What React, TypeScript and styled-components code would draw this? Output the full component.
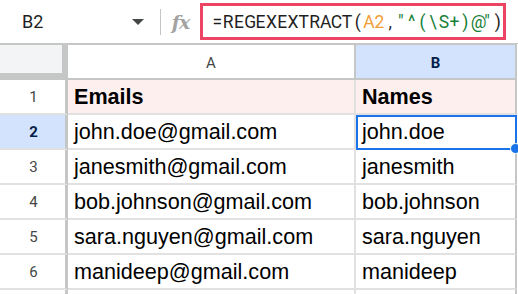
import React from "react";
import styled, { createGlobalStyle } from "styled-components";

const Global = createGlobalStyle`
  html, body { margin: 0; padding: 0; background: #fff; }
  body { font-family: "Liberation Sans", Arial, sans-serif; overflow: hidden; }
`;

const Page = styled.div`
  width: 518px;
  height: 294px;
  overflow: hidden;
  background: #fff;
`;

const FormulaBar = styled.div`
  height: 43px;
  display: flex;
  align-items: center;
  border-bottom: 1px solid #c7c7c7;
  background: #fff;
`;

const NameBox = styled.div`
  width: 160px;
  display: flex;
  align-items: center;
  padding-left: 22px;
  padding-right: 16px;
  box-sizing: border-box;
  font-family: Roboto, "Liberation Sans", sans-serif;
  font-size: 18px;
  color: #1f1f1f;
`;

const NameText = styled.span`
  flex: 1;
`;

const Caret = styled.span`
  width: 0;
  height: 0;
  border-left: 6px solid transparent;
  border-right: 6px solid transparent;
  border-top: 6px solid #444746;
`;

const Divider = styled.div`
  width: 1px;
  height: 26px;
  background: #c4c7c5;
`;

const Fx = styled.span`
  width: 39px;
  text-align: center;
  font-family: "DejaVu Serif", "Liberation Serif", serif;
  font-style: italic;
  font-weight: 700;
  font-size: 19px;
  color: #a3a3a3;
  letter-spacing: -1px;
`;

const FormulaBox = styled.div`
  width: 306px;
  height: 37px;
  box-sizing: border-box;
  border: 3px solid #ed4463;
  display: flex;
  align-items: center;
  padding-left: 9px;
  font-family: Roboto, "Liberation Sans", sans-serif;
  font-size: 17.5px;
`;

const Ch = styled.span<{ $c: string }>`
  display: inline-block;
  width: 10.9px;
  text-align: center;
  color: ${(p) => p.$c};
`;

const Grid = styled.div`
  display: grid;
  grid-template-columns: 68px 288px 161px;
  grid-auto-rows: 35px;
  grid-template-rows: 36px;
`;

const Corner = styled.div`
  box-sizing: border-box;
  background: #f3f4f5;
  border-right: 6px solid #c4c7c5;
  border-bottom: 7px solid #c4c7c5;
  border-top: 1px solid #c4c7c5;
`;

const ColHead = styled.div<{ $sel?: boolean }>`
  box-sizing: border-box;
  display: flex;
  align-items: center;
  justify-content: center;
  border-right: 2px solid #c4c7c5;
  border-bottom: 2px solid #c4c7c5;
  border-top: 1px solid #c4c7c5;
  background: ${(p) => (p.$sel ? "#d3e3fd" : "#fff")};
  color: ${(p) => (p.$sel ? "#041e49" : "#444746")};
  font-weight: ${(p) => (p.$sel ? 700 : 400)};
  font-family: Roboto, "Liberation Sans", sans-serif;
  font-size: 15px;
  padding-top: 2px;
`;

const RowHead = styled.div<{ $sel?: boolean }>`
  box-sizing: border-box;
  display: flex;
  align-items: center;
  justify-content: center;
  border-right: 3px solid #c4c7c5;
  border-bottom: 2px solid #e1e1e1;
  background: ${(p) => (p.$sel ? "#d3e3fd" : "#fff")};
  color: ${(p) => (p.$sel ? "#041e49" : "#444746")};
  font-weight: ${(p) => (p.$sel ? 700 : 400)};
  font-family: Roboto, "Liberation Sans", sans-serif;
  font-size: 15px;
  padding-left: 2px;
`;

const Cell = styled.div<{ $head?: boolean; $sel?: boolean; $last?: boolean }>`
  position: relative;
  box-sizing: border-box;
  display: flex;
  align-items: flex-end;
  padding: 0 0 3px 6px;
  border-right: 2px solid ${(p) => (p.$last ? "#c4c7c5" : "#e1e1e1")};
  border-bottom: 2px solid #e1e1e1;
  background: ${(p) => (p.$head ? "#fdefed" : "#fff")};
  font-family: "Liberation Sans", Arial, sans-serif;
  font-size: 21.6px;
  font-weight: ${(p) => (p.$head ? 700 : 400)};
  color: #000;
  white-space: nowrap;
  ${(p) =>
    p.$sel
      ? `outline: 2px solid #1a73e8; outline-offset: -2px; z-index: 1;`
      : ""}
`;

const Handle = styled.span`
  position: absolute;
  right: -6px;
  bottom: -6px;
  width: 9px;
  height: 9px;
  border-radius: 50%;
  background: #1a73e8;
  border: 1px solid #fff;
`;

const formula: [string, string][] = [
  ["=REGEXEXTRACT(", "#1f1f1f"],
  ["A2", "#f29d38"],
  [",", "#1f1f1f"],
  ['"^(\\S+)@"', "#188038"],
  [")", "#1f1f1f"],
];

const rows: [string, string][] = [
  ["Emails", "Names"],
  ["john.doe@gmail.com", "john.doe"],
  ["janesmith@gmail.com", "janesmith"],
  ["bob.johnson@gmail.com", "bob.johnson"],
  ["sara.nguyen@gmail.com", "sara.nguyen"],
  ["manideep@gmail.com", "manideep"],
  ["", ""],
];

export default function App() {
  return (
    <Page>
      <Global />
      <FormulaBar>
        <NameBox>
          <NameText>B2</NameText>
          <Caret />
        </NameBox>
        <Divider />
        <Fx>fx</Fx>
        <FormulaBox>
          {formula.map(([t, c], i) =>
            t.split("").map((ch, j) => (
              <Ch key={`${i}-${j}`} $c={c}>
                {ch}
              </Ch>
            ))
          )}
        </FormulaBox>
      </FormulaBar>
      <Grid>
        <Corner />
        <ColHead>A</ColHead>
        <ColHead $sel>B</ColHead>
        {rows.map(([a, b], i) => (
          <React.Fragment key={i}>
            <RowHead $sel={i === 1}>{i < 6 ? i + 1 : ""}</RowHead>
            <Cell $head={i === 0}>{a}</Cell>
            <Cell $head={i === 0} $sel={i === 1} $last>
              {b}
              {i === 1 && <Handle />}
            </Cell>
          </React.Fragment>
        ))}
      </Grid>
    </Page>
  );
}
